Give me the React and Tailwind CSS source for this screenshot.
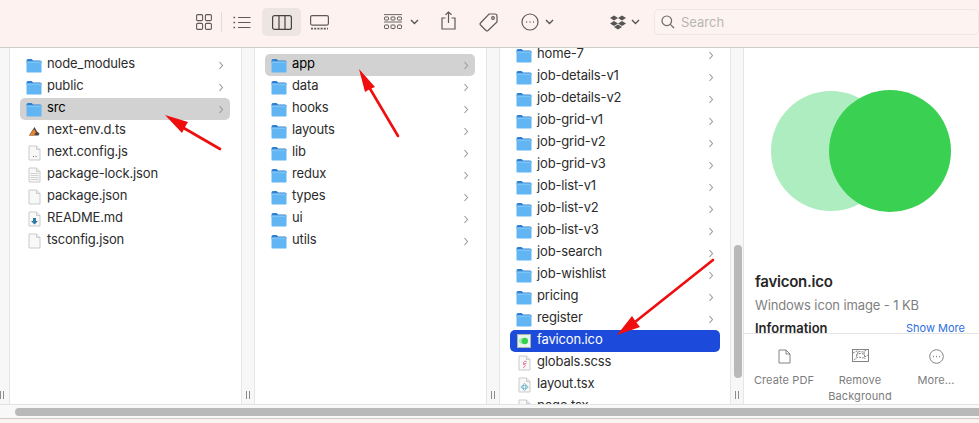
import React from "react";

function Folder() {
    return (
        <svg width="16" height="15" viewBox="0 0 16 15" className="shrink-0">
            <path d="M0.5 2.5a1.5 1.5 0 0 1 1.5-1.5h3.6l1.5 1.5h7a1.5 1.5 0 0 1 1.5 1.500v1h-15z" fill="#2f7fd0" />
            <rect x="0.5" y="3.6" width="15" height="11" rx="1.2" fill="#62b5f3" />
            <rect x="0.5" y="3.6" width="15" height="1" fill="#8ccdf8" />
        </svg>
    );
}

function FileIcon({ kind }) {
    if (kind === "favicon") {
        return (
            <svg width="14" height="14" viewBox="0 0 14 14" className="shrink-0">
                <rect x="0.5" y="0.5" width="13" height="13" fill="#e9f3ec" stroke="#a9b5ae" />
                <circle cx="4.8" cy="7" r="2.8" fill="#a5e8b4" />
                <circle cx="7.8" cy="7" r="3.2" fill="#36d04f" />
            </svg>
        );
    }
    if (kind === "swift") {
        return (
            <svg width="14" height="14" viewBox="0 0 14 14" className="shrink-0">
                <path d="M2 11.500 7.500 3l2.500 4.500 2.500 2-1 2z" fill="#454545" />
                <path d="M2 11.500 7 5l2 3-2 3.500z" fill="#e8842d" />
            </svg>
        );
    }
    return (
        <svg width="13" height="16" viewBox="0 0 13 16" className="shrink-0">
            <path d="M1 1h7.5L12 4.500V15H1z" fill="#f8f8f8" stroke="#cbcbcb" strokeLinejoin="round" />
            <path d="M8.500 1v3.500H12" fill="#e8e8e8" stroke="#cbcbcb" strokeLinejoin="round" />
            {kind === "js" && <path d="M5 11.500h1M7.500 11.500h1" stroke="#777" />}
            {kind === "lines" && <path d="M2.500 6.500h8M2.500 8.500h8M2.500 10.500h8M2.500 12.500h8" stroke="#d2d2d2" />}
            {kind === "md" && <path d="M5 7h3v3h2l-3.500 3.500L3 10h2z" fill="#2f7aa8" />}
            {kind === "scss" && <path d="M8.500 6.500c-2-1-4 1-2.500 2.500s2 2-1 4M5 9.500l3.500-1.500" fill="none" stroke="#e0709c" />}
            {kind === "tsx" && <g fill="none" stroke="#5fa9c4" strokeWidth="0.8"><ellipse cx="6.500" cy="10" rx="3.600" ry="1.500" /><ellipse cx="6.500" cy="10" rx="1.500" ry="3.600" /></g>}
        </svg>
    );
}

function Row({ name, kind, folder, state }) {
    const bg = state === "gray" ? "bg-[#d2d2d2]" : state === "blue" ? "bg-[#1c4bdb] text-white" : "text-[#2c2c2c]";
    return (
        <div className={`h-[22px] w-[210px] ml-[10px] flex items-center rounded-[5px] pl-[6px] pr-[6px] ${bg}`}>
            <div className="w-[16px] flex justify-center">{folder ? <Folder /> : <FileIcon kind={kind} />}</div>
            <span className="ml-[5px] flex-1 pb-[3px] text-[13px] leading-none tracking-[-0.15px]">{name}</span>
            {folder && (
                <svg width="6" height="9" viewBox="0 0 6 9">
                    <path d="M1.500 1 L4.500 4.500 L1.500 8" fill="none" stroke="#9a9a9a" strokeWidth="1.1" />
                </svg>
            )}
        </div>
    );
}

function Handle() {
    return (
        <div className="absolute bottom-[5px] left-1/2 -translate-x-1/2 flex gap-[2px]">
            <div className="w-px h-[8px] bg-[#8c8c8c]" />
            <div className="w-px h-[8px] bg-[#8c8c8c]" />
        </div>
    );
}

const col1 = [
    { name: "node_modules", folder: true },
    { name: "public", folder: true },
    { name: "src", folder: true, state: "gray" },
    { name: "next-env.d.ts", kind: "swift" },
    { name: "next.config.js", kind: "js" },
    { name: "package-lock.json", kind: "lines" },
    { name: "package.json", kind: "plain" },
    { name: "README.md", kind: "md" },
    { name: "tsconfig.json", kind: "plain" },
];

const col2 = [
    { name: "app", folder: true, state: "gray" },
    { name: "data", folder: true },
    { name: "hooks", folder: true },
    { name: "layouts", folder: true },
    { name: "lib", folder: true },
    { name: "redux", folder: true },
    { name: "types", folder: true },
    { name: "ui", folder: true },
    { name: "utils", folder: true },
];

const col3 = [
    { name: "home-7", folder: true },
    { name: "job-details-v1", folder: true },
    { name: "job-details-v2", folder: true },
    { name: "job-grid-v1", folder: true },
    { name: "job-grid-v2", folder: true },
    { name: "job-grid-v3", folder: true },
    { name: "job-list-v1", folder: true },
    { name: "job-list-v2", folder: true },
    { name: "job-list-v3", folder: true },
    { name: "job-search", folder: true },
    { name: "job-wishlist", folder: true },
    { name: "pricing", folder: true },
    { name: "register", folder: true },
    { name: "favicon.ico", kind: "favicon", state: "blue" },
    { name: "globals.scss", kind: "scss" },
    { name: "layout.tsx", kind: "tsx" },
    { name: "page.tsx", kind: "plain" },
];

function Chevron({ className }) {
    return (
        <svg width="9" height="6" viewBox="0 0 9 6" className={className}>
            <path d="M1 1 L4.500 4.500 L8 1" fill="none" stroke="#555" strokeWidth="1.400" />
        </svg>
    );
}

function Toolbar() {
    return (
        <div className="h-[48px] shrink-0 bg-[#fdf2ef] border-b border-[#cfcdcc] flex items-center pl-[196px] pb-[3px] text-[#5e5a58]">
            <svg width="16" height="16" viewBox="0 0 16 16" fill="none" stroke="currentColor" strokeWidth="1.100">
                <rect x="0.600" y="0.600" width="6" height="6" rx="1.200" /><rect x="9.400" y="0.600" width="6" height="6" rx="1.200" />
                <rect x="0.600" y="9.400" width="6" height="6" rx="1.200" /><rect x="9.400" y="9.400" width="6" height="6" rx="1.200" />
            </svg>
            <div className="ml-[9px] w-px h-[20px] bg-[#e4dcd9]" />
            <svg width="18" height="13" viewBox="0 0 18 13" className="ml-[11px]" fill="none" stroke="currentColor" strokeWidth="1.200">
                <path d="M5 1.500h12.500M5 6.500h12.500M5 11.500h12.500" />
                <path d="M0.500 1.500h1.600M0.500 6.500h1.600M0.500 11.500h1.600" strokeWidth="1.500" />
            </svg>
            <div className="ml-[11px] w-[39px] h-[28px] rounded-[5px] bg-[#ece5e2] flex items-center justify-center">
                <svg width="20" height="15" viewBox="0 0 20 15" fill="none" stroke="#454240" strokeWidth="1.200">
                    <rect x="0.600" y="0.600" width="18.800" height="13.800" rx="2" /><path d="M7 0.600v13.800M13 0.600v13.800" />
                </svg>
            </div>
            <svg width="19" height="15" viewBox="0 0 19 15" className="ml-[9px]" fill="none" stroke="currentColor" strokeWidth="1.200">
                <rect x="0.600" y="0.600" width="17.800" height="9.500" rx="1.500" />
                <path d="M1 13.600h17" strokeWidth="1.600" strokeDasharray="2 1.200" />
            </svg>
            <svg width="18" height="16" viewBox="0 0 18 16" className="ml-[55px]" fill="none" stroke="currentColor" strokeWidth="1">
                <path d="M0 0.600h18M0 8h18" strokeWidth="0.900" />
                <rect x="0.500" y="3" width="4" height="3" rx="0.700" /><rect x="7" y="3" width="4" height="3" rx="0.700" /><rect x="13.500" y="3" width="4" height="3" rx="0.700" />
                <rect x="0.500" y="11" width="4" height="3.500" rx="0.700" /><rect x="7" y="11" width="4" height="3.500" rx="0.700" /><rect x="13.500" y="11" width="4" height="3.500" rx="0.700" />
            </svg>
            <Chevron className="ml-[8px]" />
            <svg width="15" height="19" viewBox="0 0 15 19" className="ml-[22px] -mt-[3px]" fill="none" stroke="currentColor" strokeWidth="1.200">
                <path d="M4.500 7H1v11h13V7h-3.500M7.500 12V1M4.500 3.800 7.500 1l3 2.800" />
            </svg>
            <svg width="20" height="20" viewBox="0 0 20 20" className="ml-[23px]" fill="none" stroke="currentColor" strokeWidth="1.200">
                <path d="M10 2h6a2 2 0 0 1 2 2v6l-9 8.500a1.500 1.500 0 0 1-2 0L1.500 13a1.500 1.500 0 0 1 0-2z" />
                <circle cx="14" cy="6" r="1.300" />
            </svg>
            <svg width="18" height="18" viewBox="0 0 18 18" className="ml-[22px]" fill="none" stroke="currentColor" strokeWidth="1.200">
                <circle cx="9" cy="9" r="8" /><path d="M5.200 9h.9M8.600 9h.9M12 9h.9" strokeWidth="1.500" />
            </svg>
            <Chevron className="ml-[6px]" />
            <svg width="16" height="15" viewBox="0 0 16 15" className="ml-[56px]" fill="#555">
                <path d="M4 0.500 8 3 4 5.500 0 3zM12 0.500 16 3 12 5.500 8 3zM4 6 8 8.500 4 11 0 8.500zM12 6 16 8.500 12 11 8 8.500zM8 9.500 12 12 8 14.500 4 12z" />
            </svg>
            <Chevron className="ml-[5px]" />
            <div className="ml-[14px] w-[325px] h-[26px] rounded-[5px] border border-[#f0e6e2] bg-[#fdf4f1] flex items-center pl-[6px]">
                <svg width="14" height="14" viewBox="0 0 14 14" fill="none" stroke="#6c6866" strokeWidth="1.200">
                    <circle cx="5.800" cy="5.800" r="4.800" /><path d="M9.300 9.300 13 13" />
                </svg>
                <span className="ml-[6px] pt-[2px] text-[13px] text-[#b9b4b2]">Search</span>
            </div>
        </div>
    );
}

function Preview() {
    return (
        <div className="w-[235px] shrink-0 bg-white flex flex-col overflow-hidden">
            <div className="h-[285px] shrink-0 flex flex-col overflow-hidden pl-[11px] pr-[14px]">
                <svg width="210" height="124" viewBox="0 0 210 124" className="mt-[41px] shrink-0 -ml-[1px]">
                    <circle cx="77" cy="62" r="60" fill="#aeedc0" />
                    <circle cx="136" cy="62" r="61" fill="#3ad052" />
                </svg>
                <div className="mt-[60px] text-[15px] leading-[18px] font-semibold tracking-[-0.25px] text-[#262626]">favicon.ico</div>
                <div className="mt-[6px] text-[13px] leading-[16px] tracking-[-0.12px] text-[#7f7f7f]">Windows icon image - 1 KB</div>
                <div className="mt-[7px] flex items-center justify-between">
                    <span className="text-[13px] leading-[16px] font-semibold text-[#262626]">Information</span>
                    <span className="text-[11px] text-[#2f6fe0]">Show More</span>
                </div>
            </div>
            <div className="flex-1 border-t border-[#e4e4e4] grid grid-cols-[76px_76px_76px] pl-[2px] text-[11px] leading-[16px] tracking-[0.1px] text-[#7d7d7d] text-center">
                <div className="flex flex-col items-center pt-[15px]">
                    <svg width="13" height="15" viewBox="0 0 13 15" fill="none" stroke="#777" strokeWidth="0.900">
                        <path d="M1 1h7l4 4v9H1zM8 1v4h4" />
                    </svg>
                    <span className="mt-[8px]">Create PDF</span>
                </div>
                <div className="flex flex-col items-center pt-[15px]">
                    <svg width="17" height="13" viewBox="0 0 17 13" fill="none" stroke="#777" strokeWidth="0.900">
                        <rect x="0.500" y="0.500" width="16" height="12" />
                        <path d="M1 4 5 2l5 1 5-2M2 11l4-3 5 1 5-3M4 6c2-2 7-2 9 0M6 3 4 9M12 3l1 7" strokeDasharray="2 1" />
                    </svg>
                    <span className="mt-[10px]">Remove Background</span>
                </div>
                <div className="flex flex-col items-center pt-[15px]">
                    <svg width="15" height="15" viewBox="0 0 15 15" fill="none" stroke="#777" strokeWidth="0.900">
                        <circle cx="7.500" cy="7.500" r="6.800" /><path d="M4.200 7.500h.8M7.100 7.500h.8M10 7.500h.8" strokeWidth="1.300" />
                    </svg>
                    <span className="mt-[8px]">More...</span>
                </div>
            </div>
        </div>
    );
}

export default function App() {
    return (
        <div className="relative w-[979px] h-[423px] overflow-hidden flex flex-col bg-white font-['Inter',sans-serif]">
            <Toolbar />
            <div className="flex-1 min-h-0 flex bg-[#f7f7f7]">
                <div className="w-[10px] shrink-0 relative border-r border-[#e6e6e6]">
                    <div className="absolute bottom-[5px] left-0 flex gap-[2px]">
                        <div className="w-px h-[8px] bg-[#8c8c8c]" />
                        <div className="w-px h-[8px] bg-[#8c8c8c]" />
                    </div>
                </div>
                <div className="w-[231px] shrink-0 bg-white pt-[6px]">
                    {col1.map((r) => <Row key={r.name} {...r} />)}
                </div>
                <div className="w-[14px] shrink-0 relative border-x border-[#e6e6e6]"><Handle /></div>
                <div className="w-[231px] shrink-0 bg-white pt-[6px]">
                    {col2.map((r) => <Row key={r.name} {...r} />)}
                </div>
                <div className="w-[14px] shrink-0 relative border-x border-[#e6e6e6]"><Handle /></div>
                <div className="w-[230px] shrink-0 bg-white overflow-hidden">
                    <div className="-mt-[4px]">
                        {col3.map((r) => <Row key={r.name} {...r} />)}
                    </div>
                </div>
                <div className="w-[14px] shrink-0 relative border-x border-[#e6e6e6]">
                    <div className="absolute left-[3px] top-[197px] w-[8px] h-[133px] rounded-full bg-[#b9b9b9]" />
                    <Handle />
                </div>
                <Preview />
            </div>
            <div className="h-[14px] shrink-0 bg-[#f8f8f8] border-t border-[#e3e3e3] pt-[3px] pl-[15px]">
                <div className="h-[8px] rounded-l-full bg-[#b9b9b9]" />
            </div>
            <div className="h-[5px] shrink-0 bg-[#fbf3ef] border-t border-[#cfc8c4]" />

            {/* flechas rojas */}
            <svg className="absolute inset-0 pointer-events-none" width="979" height="423" viewBox="0 0 979 423">
                <g stroke="#f00d0d" strokeWidth="2.600" strokeLinecap="round" fill="#f00d0d">
                    <path d="M220 149 182 127" />
                    <path d="M165 115 188 122 185 127 182 133z" stroke="none" />
                    <path d="M398 136 369 87" />
                    <path d="M359 69 375 87 370 89 365 92z" stroke="none" />
                    <path d="M713 260 635 322" />
                    <path d="M617 335 632 316 636 322 640 327z" stroke="none" />
                </g>
            </svg>
        </div>
    );
}
